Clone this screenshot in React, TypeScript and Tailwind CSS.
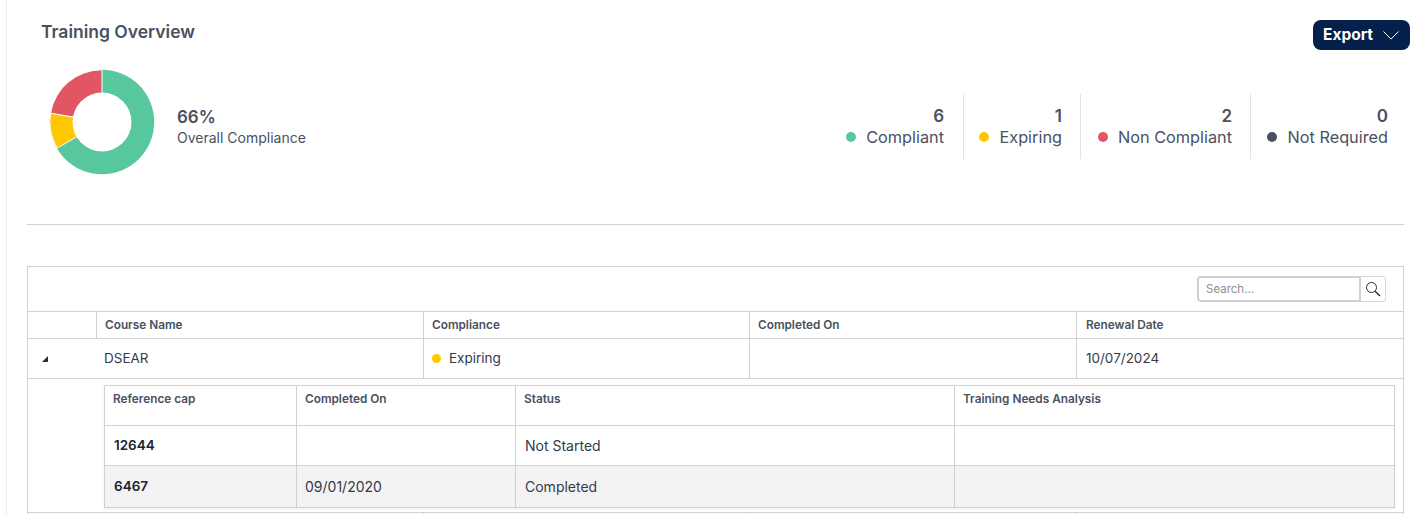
import React from "react";

const stats = [
  { count: 6, label: "Compliant", dot: "bg-[#57c79d]", cell: "w-[118px] pr-[19px] border-r border-[#e4e4e6]" },
  { count: 1, label: "Expiring", dot: "bg-[#ffc700]", cell: "w-[117px] pr-[18px] border-r border-[#e4e4e6]" },
  { count: 2, label: "Non Compliant", dot: "bg-[#e25563]", cell: "w-[170px] pr-[18px] border-r border-[#e4e4e6]" },
  { count: 0, label: "Not Required", dot: "bg-[#495161]", cell: "w-[153px] pr-[16px]" },
];

const subRows = [
  { ref: "12644", completed: "", status: "Not Started", shaded: false },
  { ref: "6467", completed: "09/01/2020", status: "Completed", shaded: true },
];

function Donut() {
  return (
    <svg width="106" height="106" viewBox="0 0 106 106" className="block">
      <circle cx="53" cy="53" r="52.2" fill="#57c79d" />
      <path d="M53 53 L8.3 79.1 A52.2 52.2 0 0 1 1.5 44.1 Z" fill="#ffc700" stroke="#fff" strokeWidth="1" />
      <path d="M53 53 L1.5 44.1 A52.2 52.2 0 0 1 53 0.8 Z" fill="#e25563" stroke="#fff" strokeWidth="1" />
      <circle cx="53" cy="53" r="29.5" fill="#fff" />
    </svg>
  );
}

export default function App() {
  return (
    <div className="h-[514px] w-[1417px] overflow-hidden bg-white font-['Inter',sans-serif] text-[#495161]">
      <div className="ml-[6px] h-full border-l border-[#e6edf3] pl-[20px] pr-[13px]">
        {/* Summary */}
        <div className="relative h-[225px] border-b border-[#d0d1d4]">
          <h2 className="pl-[14px] pt-[21px] text-[17.5px] font-semibold leading-[22px]">Training Overview</h2>
          <button className="absolute left-[1286px] top-[20px] flex h-[30px] w-[97px] items-center gap-[10px] rounded-[8px] bg-[#05204a] pl-[10px] text-[15.5px] font-bold text-white">
            Export
            <svg width="16" height="9" viewBox="0 0 16 9" fill="none" stroke="currentColor" strokeWidth="1">
              <path d="M0.5 0.5 L8 8 L15.5 0.5" />
            </svg>
          </button>

          <div className="flex items-start justify-between pl-[22px] pt-[26px]">
            <div className="flex items-center gap-[22px]">
              <Donut />
              <div className="pt-[10px]">
                <div className="text-[17px] font-semibold leading-[22px]">66%</div>
                <div className="text-[14px] leading-[20px]">Overall Compliance</div>
              </div>
            </div>

            <div className="mt-[25px] flex h-[65px]">
              {stats.map((s) => (
                <div key={s.label} className={`${s.cell} flex flex-col items-end justify-center pb-[2px]`}>
                  <div className="text-[17px] font-semibold leading-[22px]">{s.count}</div>
                  <div className="flex items-center gap-[10px] whitespace-nowrap text-[16.3px] leading-[20px]">
                    <span className={`h-[10px] w-[10px] rounded-full ${s.dot}`} />
                    {s.label}
                  </div>
                </div>
              ))}
            </div>
          </div>
        </div>

        {/* Grid */}
        <div className="mt-[41px] border border-b-0 border-[#cfd0d4]">
          <div className="flex h-[45px] items-center justify-end border-b border-[#cfd0d4] pr-[17px]">
            <div className="flex h-[26px] w-[189px] items-stretch">
              <div className="flex flex-1 items-center rounded-l-[4px] border-2 border-[#cfd0d4] pl-[7px] pt-[1px] text-[11.5px] text-[#8a8f98]">
                Search...
              </div>
              <div className="flex w-[25px] items-center justify-center rounded-r-[4px] border border-l-0 border-[#d6d7da]">
                <svg width="16" height="16" viewBox="0 0 16 16" fill="none" stroke="#1f2a3c">
                  <circle cx="6.5" cy="6.5" r="5" strokeWidth="1" />
                  <path d="M10.2 10.2 L15 15" strokeWidth="1.4" />
                </svg>
              </div>
            </div>
          </div>

          <div className="grid h-[27px] grid-cols-[69px_327px_326px_327px_1fr] border-b border-[#cfd0d4] text-[11.8px] font-semibold leading-[26px]">
            <div className="border-r border-[#cfd0d4]" />
            <div className="border-r border-[#cfd0d4] pl-[8px]">Course Name</div>
            <div className="border-r border-[#cfd0d4] pl-[8px]">Compliance</div>
            <div className="border-r border-[#cfd0d4] pl-[8px]">Completed On</div>
            <div className="pl-[9px]">Renewal Date</div>
          </div>

          <div className="grid h-[40px] grid-cols-[69px_327px_326px_327px_1fr] border-b border-[#cfd0d4] text-[13.5px] leading-[39px] text-[#343a4a]">
            <div className="flex items-center pl-[14px]">
              <svg width="6" height="6" viewBox="0 0 6 6">
                <path d="M6 0V6H0Z" fill="#2f2f2f" />
              </svg>
            </div>
            <div className="border-r border-[#cfd0d4] pl-[7px]">DSEAR</div>
            <div className="flex items-center gap-[8px] border-r border-[#cfd0d4] pl-[8px]">
              <span className="h-[9px] w-[9px] rounded-full bg-[#ffc700]" />
              Expiring
            </div>
            <div className="border-r border-[#cfd0d4]" />
            <div className="pl-[9px]">10/07/2024</div>
          </div>

          {/* Expanded detail */}
          <div className="h-[134px] border-b border-[#cfd0d4] pl-[76px] pr-[8px] pt-[6px]">
            <div className="border border-[#cfd0d4] shadow-[0_1px_2px_rgba(0,0,0,0.08)]">
              <div className="grid h-[40px] grid-cols-[192px_219px_439px_1fr] border-b border-[#cfd0d4] text-[11.8px] font-semibold leading-[26px]">
                <div className="border-r border-[#cfd0d4] pl-[8px]">Reference cap</div>
                <div className="border-r border-[#cfd0d4] pl-[8px]">Completed On</div>
                <div className="border-r border-[#cfd0d4] pl-[8px]">Status</div>
                <div className="pl-[8px]">Training Needs Analysis</div>
              </div>
              {subRows.map((r) => (
                <div
                  key={r.ref}
                  className={`grid grid-cols-[192px_219px_439px_1fr] text-[14px] text-[#343a4a] ${r.shaded ? "h-[41px] bg-[#f3f3f3] leading-[41px]" : "h-[40px] border-b border-[#cfd0d4] leading-[39px]"}`}
                >
                  <div className="border-r border-[#cfd0d4] pl-[9px] text-[13.5px] font-semibold text-[#1b2333]">{r.ref}</div>
                  <div className="border-r border-[#cfd0d4] pl-[8px]">{r.completed}</div>
                  <div className="border-r border-[#cfd0d4] pl-[9px]">{r.status}</div>
                  <div />
                </div>
              ))}
            </div>
          </div>

          <div className="grid h-[20px] grid-cols-[396px_326px_327px_1fr]">
            <div className="border-r border-[#cfd0d4]" />
            <div className="border-r border-[#cfd0d4]" />
            <div className="border-r border-[#cfd0d4]" />
            <div />
          </div>
        </div>
      </div>
    </div>
  );
}
